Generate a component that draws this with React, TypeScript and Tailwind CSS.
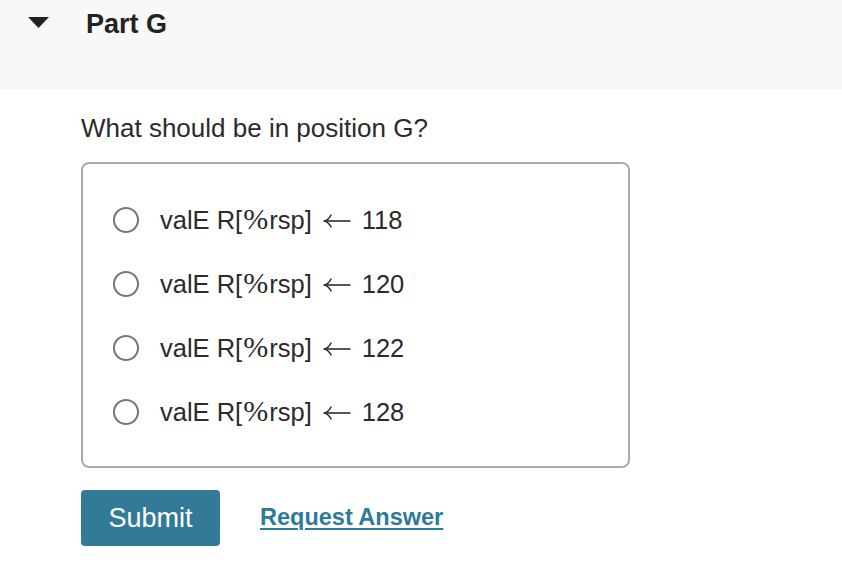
const options = ["118", "120", "122", "128"];

const Radio = () => (
  <span className="block w-[26px] h-[26px] rounded-full border-2 border-[#767676] bg-white shrink-0" />
);

// TeX-style left arrow
const LeftArrow = () => (
  <svg className="inline-block align-middle ml-[11px] mr-[11px] relative top-[-1px]" width="28" height="14" viewBox="0 0 28 14">
    <path d="M1.5 7 H27.5" stroke="#2b2b2b" strokeWidth="1.6" fill="none" />
    <path d="M8 1 Q6 5.5 1.5 7 Q6 8.5 8 13" stroke="#2b2b2b" strokeWidth="1.5" fill="none" strokeLinecap="round" />
  </svg>
);

const App = () => {
  return (
    <div className="min-h-screen bg-white text-[#2b2b2b] font-['Liberation_Sans',Arial,sans-serif]">
      <div className="h-[89px] bg-[#f8f8f8] flex items-start pt-[9px]">
        <svg className="ml-[28px] mt-[8px]" width="21" height="11" viewBox="0 0 21 11">
          <path d="M0 0 H21 L10.5 11 Z" fill="#222" />
        </svg>
        <h2 className="ml-[37px] text-[27px] leading-[31px] font-bold text-[#222]">Part G</h2>
      </div>

      <div className="pl-[81px] pt-[24px]">
        <p className="text-[26px] leading-[30px]">What should be in position G?</p>

        <div className="mt-[19px] w-[549px] border-2 border-[#aaaaaa] rounded-[8px] pt-[24px] pb-[22px] pl-[30px]">
          {options.map((v) => (
            <label key={v} className="h-[64px] flex items-center gap-[21px]">
              <Radio />
              <span className="text-[25.5px] leading-[30px] whitespace-nowrap">
                valE R[
                <span className="font-['Liberation_Serif',serif] text-[30px] leading-[20px] mx-[1px]">%</span>
                rsp]
                <LeftArrow />
                {v}
              </span>
            </label>
          ))}
        </div>

        <div className="mt-[22px] flex items-center gap-[40px]">
          <button className="w-[139px] h-[56px] rounded-[4px] bg-[#337a98] text-white text-[27px]">
            Submit
          </button>
          <a href="#" className="text-[23.5px] font-bold text-[#2e7a9b] underline underline-offset-[3px] decoration-2">
            Request Answer
          </a>
        </div>
      </div>
    </div>
  );
};

export default App;
